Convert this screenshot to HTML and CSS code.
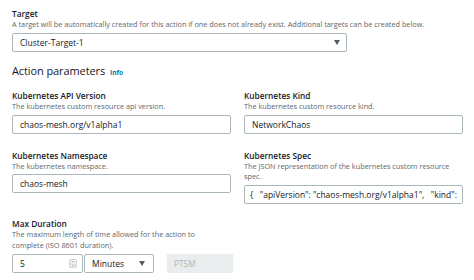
FILE: index.html
```html
<!DOCTYPE html>
<html>
<head>
<meta charset="utf-8">
<link rel="stylesheet" href="styles.css">
</head>
<body>
<div class="page">
  <div class="field">
    <div class="label">Target</div>
    <div class="desc">A target will be automatically created for this action if one does not already exist. Additional targets can be created below.</div>
    <div class="select target-select"><span>Cluster-Target-1</span><span class="caret"></span></div>
  </div>
  <h2 class="heading">Action parameters <span class="info">Info</span></h2>
  <div class="grid">
    <div class="field">
      <div class="label">Kubernetes API Version</div>
      <div class="desc">The kubernetes custom resource api version.</div>
      <div class="input">chaos-mesh.org/v1alpha1</div>
    </div>
    <div class="field">
      <div class="label">Kubernetes Kind</div>
      <div class="desc">The kubernetes custom resource kind.</div>
      <div class="input">NetworkChaos</div>
    </div>
    <div class="field">
      <div class="label">Kubernetes Namespace</div>
      <div class="desc">The kubernetes namespace.</div>
      <div class="input">chaos-mesh</div>
    </div>
    <div class="field">
      <div class="label">Kubernetes Spec</div>
      <div class="desc">The JSON representation of the kubernetes custom resource spec.</div>
      <div class="input spec">{&nbsp;&nbsp;&nbsp;"apiVersion": "chaos-mesh.org/v1alpha1",&nbsp;&nbsp;&nbsp;"kind":</div>
    </div>
  </div>
  <div class="field duration">
    <div class="label">Max Duration</div>
    <div class="desc narrow">The maximum length of time allowed for the action to complete (ISO 8601 duration).</div>
    <div class="row">
      <div class="input num"><span>5</span>
        <svg class="spin" width="8" height="9" viewBox="0 0 8 9"><rect x="0.5" y="0.5" width="7" height="8" rx="1.5" fill="#f4f4f4" stroke="#d0d0d0"/><path d="M2.5 3.6 L4 2.2 L5.5 3.6 M2.5 5.4 L4 6.8 L5.5 5.4" fill="none" stroke="#9a9a9a" stroke-width="0.8"/></svg>
      </div>
      <div class="select unit"><span>Minutes</span><span class="caret"></span></div>
      <div class="readonly">PT5M</div>
    </div>
  </div>
</div>
</body>
</html>
```
FILE: styles.css
```css
html, body { margin: 0; padding: 0; background: #fff; }
body { font-family: "Open Sans", "Liberation Sans", sans-serif; color: #16191f; }
.page { padding: 8px 0 0 12px; width: 451px; }
.field { display: flex; flex-direction: column; }
.label { font-size: 8.3px; font-weight: 600; line-height: 11px; color: #16191f; }
.desc { font-size: 7.3px; line-height: 10.8px; color: #5f666d; margin-bottom: 3px; }
.desc.narrow { width: 195px; }
.select, .input {
  box-sizing: border-box; height: 19px; border: 1px solid #aab7b8; border-radius: 2px;
  display: flex; align-items: center; padding: 0 7px; font-size: 8.5px; color: #16191f; background: #fff;
}
.target-select { width: 335px; justify-content: space-between; padding-right: 6px; }
.caret { width: 0; height: 0; border-left: 3.5px solid transparent; border-right: 3.5px solid transparent; border-top: 5px solid #545b64; }
.heading { margin: 11px 0 9px; font-size: 11px; font-weight: 400; line-height: 16px; letter-spacing: -0.1px; display: flex; align-items: baseline; gap: 5px; }
.info { font-size: 6.5px; font-weight: 700; color: #0073bb; letter-spacing: 0; }
.grid { display: grid; grid-template-columns: 219px 219px; column-gap: 13px; row-gap: 16px; align-items: start; }
.spec { white-space: nowrap; overflow: hidden; padding-left: 5px; }
.duration { margin-top: 14px; }
.row { display: flex; align-items: center; }
.num { width: 71px; justify-content: space-between; padding-right: 5px; }
.unit { width: 70px; margin-left: 1px; justify-content: space-between; padding-right: 8px; }
.readonly { box-sizing: border-box; width: 66px; height: 19px; margin-left: 13px; background: #eaeded; color: #aab7b8; font-size: 8.3px; display: flex; align-items: center; padding-left: 7px; }
```
